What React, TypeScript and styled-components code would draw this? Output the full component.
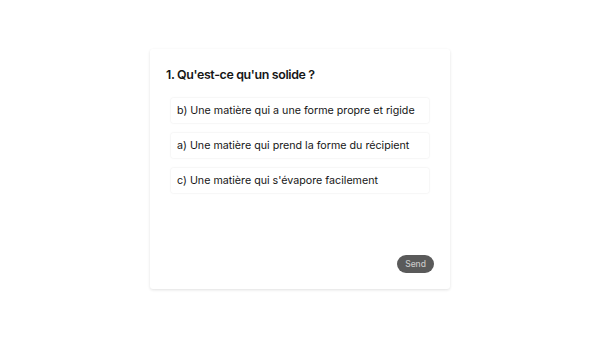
import styled, { createGlobalStyle } from "styled-components";

const GlobalStyle = createGlobalStyle`
  html, body {
    margin: 0;
    padding: 0;
    background: #ffffff;
    font-family: "Inter", "Liberation Sans", sans-serif;
  }
`;

const options = [
  "b) Une matière qui a une forme propre et rigide",
  "a) Une matière qui prend la forme du récipient",
  "c) Une matière qui s'évapore facilement",
];

const App = () => {
  return (
    <>
      <GlobalStyle />
      <StyledComponents.Page>
        <StyledComponents.Card>
          <StyledComponents.Title>1. Qu'est-ce qu'un solide ?</StyledComponents.Title>
          <StyledComponents.Options>
            {options.map((o) => (
              <StyledComponents.Option key={o}>{o}</StyledComponents.Option>
            ))}
          </StyledComponents.Options>
          <StyledComponents.Footer>
            <StyledComponents.SendButton>Send</StyledComponents.SendButton>
          </StyledComponents.Footer>
        </StyledComponents.Card>
      </StyledComponents.Page>
    </>
  );
};

export default App;

const StyledComponents = {
  Page: styled.div`
    width: 600px;
    height: 338px;
    display: flex;
    justify-content: center;
    padding-top: 49px;
    box-sizing: border-box;
  `,
  Card: styled.div`
    width: 300px;
    height: 240px;
    box-sizing: border-box;
    background: #ffffff;
    border-radius: 3px;
    box-shadow: 0 1px 3px rgba(0, 0, 0, 0.12);
    padding: 18px 16px 16px 16px;
    display: flex;
    flex-direction: column;
  `,
  Title: styled.div`
    font-size: 12.4px;
    font-weight: 600;
    letter-spacing: -0.35px;
    color: #161616;
    line-height: 16px;
    margin-bottom: 15px;
  `,
  Options: styled.div`
    display: flex;
    flex-direction: column;
    gap: 10px;
    padding: 0 5px;
  `,
  Option: styled.div`
    height: 25px;
    display: flex;
    align-items: center;
    padding: 0 6px;
    font-size: 10.7px;
    color: #161616;
    border-radius: 2px;
    box-shadow: 0 0 2px rgba(0, 0, 0, 0.12);
  `,
  Footer: styled.div`
    margin-top: auto;
    display: flex;
    justify-content: flex-end;
  `,
  SendButton: styled.button`
    height: 18px;
    padding: 0 8px;
    border: none;
    border-radius: 9px;
    background: #5a5a5a;
    color: #c8c8c8;
    font-family: "Inter", "Liberation Sans", sans-serif;
    font-size: 8.5px;
    font-weight: 500;
  `,
};
